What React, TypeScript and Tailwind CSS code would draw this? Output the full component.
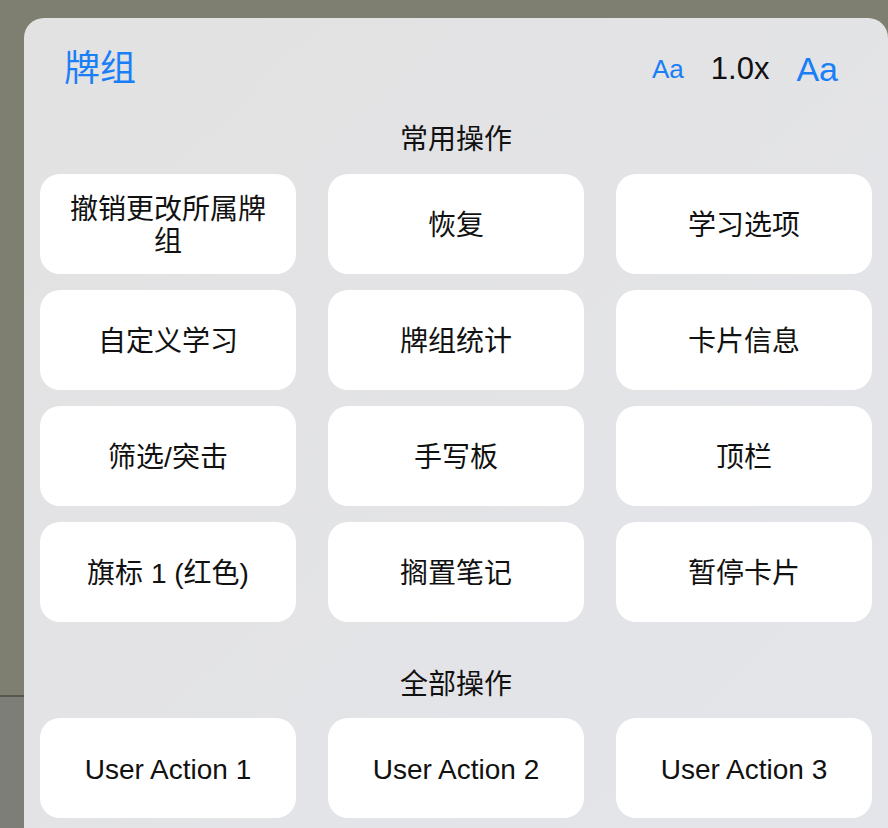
const common = [
  '撤销更改所属牌组',
  '恢复',
  '学习选项',
  '自定义学习',
  '牌组统计',
  '卡片信息',
  '筛选/突击',
  '手写板',
  '顶栏',
  '旗标 1 (红色)',
  '搁置笔记',
  '暂停卡片',
];

const userActions = ['User Action 1', 'User Action 2', 'User Action 3'];

const font = "font-['Liberation_Sans','Noto_Sans_CJK_SC',sans-serif]";

function ActionButton({ label }: { label: string }) {
  return (
    <button className="h-[100px] rounded-[20px] bg-white px-6 pt-[4px] text-center text-[28px] leading-[32px] text-[#111]">
      {label}
    </button>
  );
}

function SectionTitle({ children }: { children: string }) {
  return <div className="h-[38px] pt-[3px] text-center text-[28px] leading-[38px] text-[#111]">{children}</div>;
}

export default function App() {
  return (
    <div className={`flex h-[828px] w-[888px] overflow-hidden bg-[#7e7f70] ${font}`}>
      {/* backdrop strip on the left */}
      <div className="flex w-6 shrink-0 flex-col">
        <div className="h-[695px] bg-[#7e7f70]" />
        <div className="h-[2px] bg-[#55574f]" />
        <div className="flex-1 bg-[#7d7e78]" />
      </div>

      <div className="mt-[18px] flex-1 rounded-t-[20px] bg-gradient-to-br from-[#e2e2e2] to-[#e4e5ea] px-4">
        {/* header */}
        <div className="flex h-[100px] items-center justify-between pl-6 pr-[34px] pt-[2px]">
          <span className="text-[36px] text-[#1a7ff7]">牌组</span>
          <div className="flex items-center gap-[27px]">
            <span className="text-[26px] text-[#1a7ff7]">Aa</span>
            <span className="text-[31px] text-[#111]">1.0x</span>
            <span className="text-[34px] text-[#1a7ff7]">Aa</span>
          </div>
        </div>

        <SectionTitle>常用操作</SectionTitle>
        <div className="mt-[18px] grid grid-cols-3 gap-x-8 gap-y-4">
          {common.map((label) => (
            <ActionButton key={label} label={label} />
          ))}
        </div>

        <div className="mt-[41px]">
          <SectionTitle>全部操作</SectionTitle>
        </div>
        <div className="mt-[17px] grid grid-cols-3 gap-x-8">
          {userActions.map((label) => (
            <ActionButton key={label} label={label} />
          ))}
        </div>
      </div>
    </div>
  );
}
